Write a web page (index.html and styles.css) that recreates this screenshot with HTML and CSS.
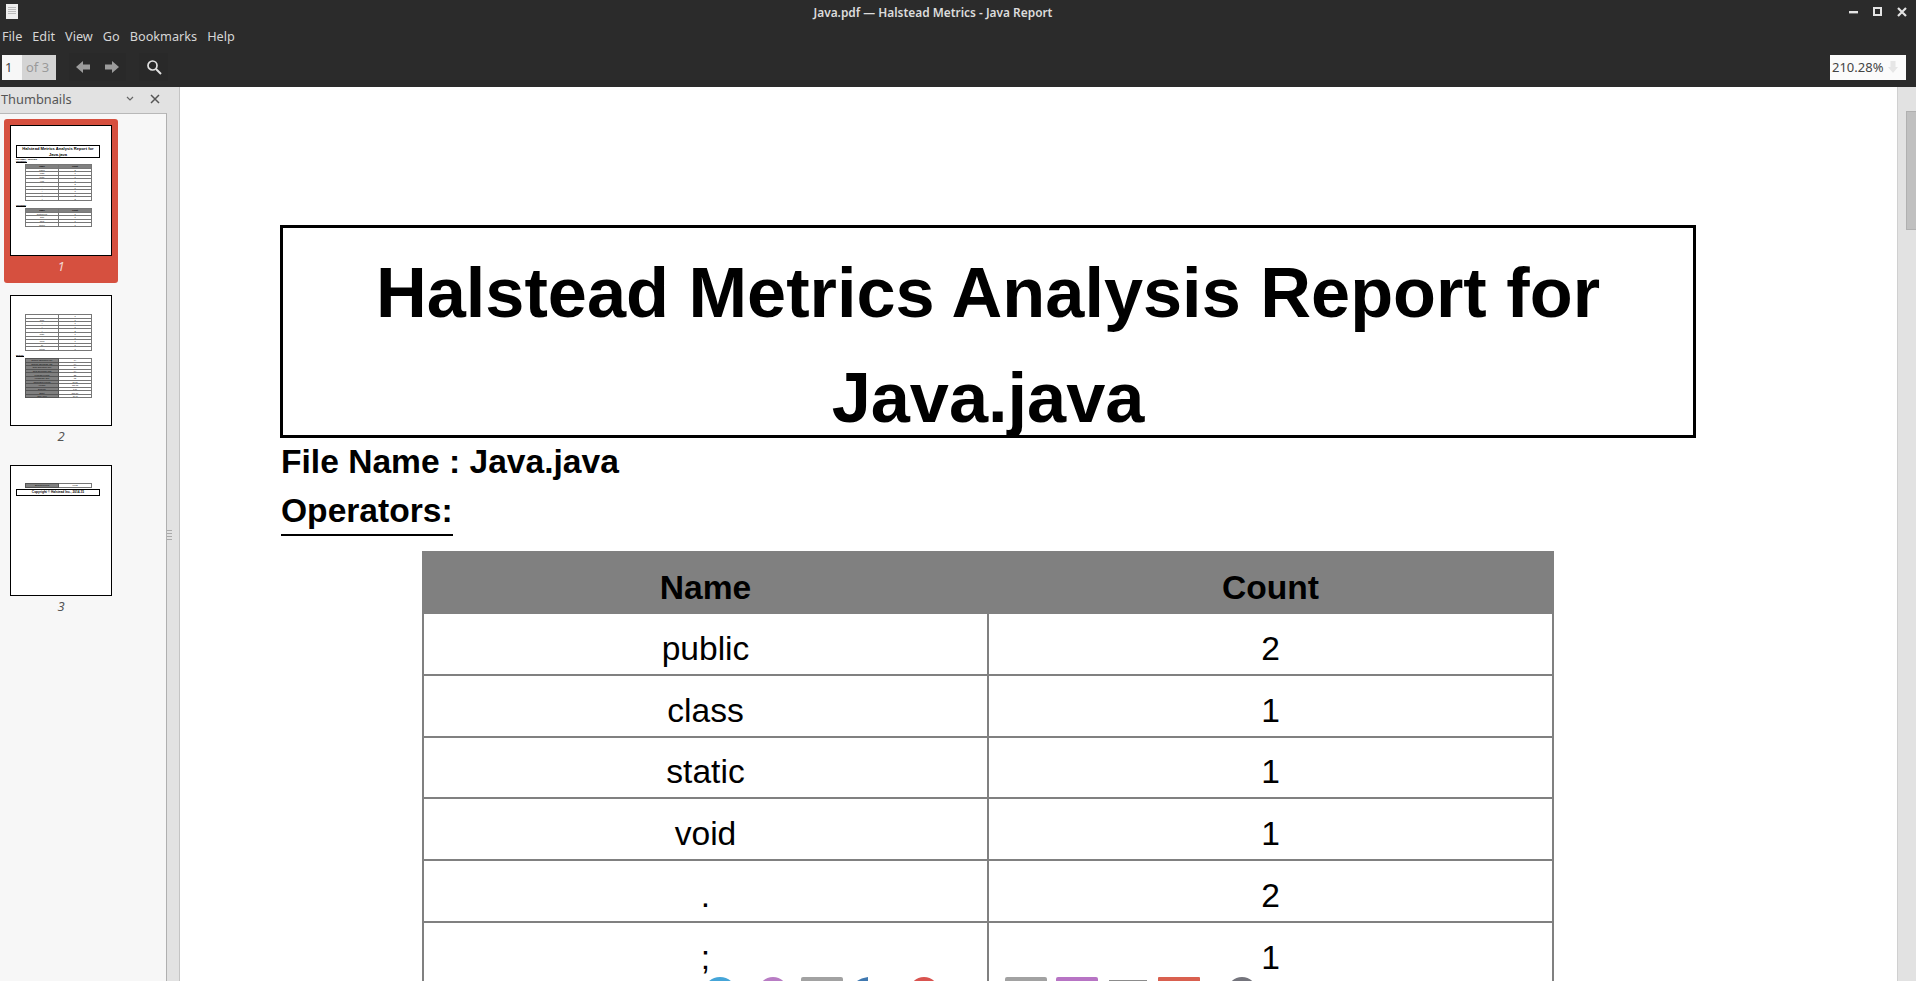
FILE: index.html
```html
<!DOCTYPE html>
<html lang="en">
<head>
  <meta charset="UTF-8" />
  <title>Java.pdf — Halstead Metrics - Java Report</title>
  <link rel="stylesheet" href="styles.css">
</head>
<body>
  <div class="titlebar">
    <div class="app-icon"><span></span><span></span><span></span><span></span></div>
    <div class="window-title">Java.pdf — Halstead Metrics - Java Report</div>
    <div class="window-btns">
      <svg width="12" height="12" viewBox="0 0 12 12"><rect x="1" y="5" width="9" height="2.4" fill="#e4e4e4"/></svg>
      <svg width="12" height="12" viewBox="0 0 12 12"><rect x="2" y="2" width="7" height="7" fill="none" stroke="#e4e4e4" stroke-width="2"/></svg>
      <svg width="12" height="12" viewBox="0 0 12 12"><path d="M2 2l8 8M10 2l-8 8" stroke="#e4e4e4" stroke-width="2.2"/></svg>
    </div>
  </div>

  <div class="menubar">
    <span>File</span><span>Edit</span><span>View</span><span>Go</span><span>Bookmarks</span><span>Help</span>
  </div>

  <div class="toolbar">
    <div class="page-field"><span class="page-num">1</span><span class="page-total">of 3</span></div>
    <div class="tool-group nav-group">
      <svg width="16" height="14" viewBox="0 0 16 14"><path d="M1 7l7-6v3.500h7v5H8V13z" fill="#9c9c9c"/></svg>
      <svg width="16" height="14" viewBox="0 0 16 14"><path d="M15 7L8 1v3.500H1v5h7V13z" fill="#9c9c9c"/></svg>
    </div>
    <div class="tool-group search-group">
      <svg width="16" height="16" viewBox="0 0 16 16"><circle cx="6.500" cy="6.500" r="4.500" fill="none" stroke="#e2e2e2" stroke-width="1.700"/><path d="M10 10l5 5" stroke="#e2e2e2" stroke-width="2"/></svg>
    </div>
    <div class="zoom-field">
      <span>210.28%</span>
      <svg width="12" height="14" viewBox="0 0 12 14"><path d="M6 13L1 7h2.500V1h5v6H11z" fill="#e6e6e6"/></svg>
    </div>
  </div>

  <div class="workspace">
    <aside class="sidebar">
      <div class="sidebar-inner">
        <div class="sidebar-head">
          <span class="sidebar-label">Thumbnails</span>
          <svg class="chev" width="10" height="8" viewBox="0 0 10 8"><path d="M2 2l3 3 3-3" fill="none" stroke="#666" stroke-width="1.200"/></svg>
          <svg class="closer" width="10" height="10" viewBox="0 0 10 10"><path d="M1 1l8 8M9 1L1 9" stroke="#555" stroke-width="1.500"/></svg>
        </div>
        <div class="thumb-list">
          <div class="thumb selected">
            <div class="mini-page">
              <div class="mini-title">Halstead Metrics Analysis Report for Java.java</div>
              <div class="mini-line">File Name : Java.java</div>
              <div class="mini-head">Operators:</div>
              <table class="mini-table">
                <tr class="mini-top"><td>Name</td><td>Count</td></tr>
                <tr><td>public</td><td>2</td></tr>
                <tr><td>class</td><td>1</td></tr>
                <tr><td>static</td><td>1</td></tr>
                <tr><td>void</td><td>1</td></tr>
                <tr><td>.</td><td>2</td></tr>
                <tr><td>;</td><td>1</td></tr>
                <tr><td>(</td><td>3</td></tr>
                <tr><td>)</td><td>3</td></tr>
                <tr><td>{</td><td>2</td></tr>
              </table>
              <div class="mini-head operands">Operands:</div>
              <table class="mini-table">
                <tr class="mini-top"><td>Name</td><td>Count</td></tr>
                <tr><td>System.out</td><td>1</td></tr>
                <tr><td>args</td><td>1</td></tr>
                <tr><td>Java</td><td>1</td></tr>
                <tr><td>println</td><td>1</td></tr>
              </table>
            </div>
            <div class="thumb-num">1</div>
          </div>
          <div class="thumb">
            <div class="mini-page page-two">
              <table class="mini-table">
                <tr><td>&nbsp;</td><td>1</td></tr>
                <tr><td>Type</td><td>1</td></tr>
                <tr><td>[</td><td>1</td></tr>
                <tr><td>]</td><td>1</td></tr>
                <tr><td>}</td><td>2</td></tr>
                <tr><td>main</td><td>1</td></tr>
                <tr><td>:</td><td>1</td></tr>
                <tr><td>Long</td><td>1</td></tr>
                <tr><td>int</td><td>1</td></tr>
                <tr><td>String</td><td>1</td></tr>
              </table>
              <div class="mini-head metrics">Metrics:</div>
              <table class="mini-table side-table">
                <tr><td>Distinct Operators (n1)</td><td>14</td></tr>
                <tr><td>Distinct Operands (n2)</td><td>04</td></tr>
                <tr><td>Total Operators (N1)</td><td>24</td></tr>
                <tr><td>Total Operands (N2)</td><td>04</td></tr>
                <tr><td>Program Length</td><td>28</td></tr>
                <tr><td>Vocabulary Size</td><td>18</td></tr>
                <tr><td>Calculated Length</td><td>61.30</td></tr>
                <tr><td>Volume</td><td>116.75</td></tr>
                <tr><td>Difficulty</td><td>7.00</td></tr>
                <tr><td>Effort</td><td>817.30</td></tr>
                <tr><td>Time (sec)</td><td>45.40</td></tr>
              </table>
            </div>
            <div class="thumb-num">2</div>
          </div>
          <div class="thumb">
            <div class="mini-page page-three">
              <table class="mini-table side-table">
                <tr><td>Bugs Delivered</td><td>0.038</td></tr>
              </table>
              <div class="mini-title mini-foot">Copyright © Halstead Inc., 2014-15</div>
            </div>
            <div class="thumb-num">3</div>
          </div>
        </div>
      </div>
      <div class="splitter"><span class="grip"></span></div>
    </aside>

    <main class="doc">
      <div class="page">
        <h1 class="report-title">Halstead Metrics Analysis Report for Java.java</h1>
        <p class="file-name">File Name : Java.java</p>
        <h2 class="section-head">Operators:</h2>
        <table class="report-table">
          <tr class="head-row"><th>Name</th><th>Count</th></tr>
          <tr><td>public</td><td>2</td></tr>
          <tr><td>class</td><td>1</td></tr>
          <tr><td>static</td><td>1</td></tr>
          <tr><td>void</td><td>1</td></tr>
          <tr><td>.</td><td>2</td></tr>
          <tr><td>;</td><td>1</td></tr>
        </table>
      </div>
    </main>

    <div class="scrollbar"><div class="scroll-thumb"></div></div>

    <svg class="dock" width="570" height="4" viewBox="0 0 570 4">
      <ellipse cx="30" cy="15" rx="16" ry="15" fill="#45a5d8"/>
      <circle cx="83" cy="15" r="15" fill="#b87cc4"/>
      <rect x="111" y="0" width="42" height="8" rx="2" fill="#a2a2a2"/>
      <path d="M167 4q4-3 11-4v4z" fill="#3f78b0"/>
      <circle cx="234" cy="15" r="15" fill="#d9534f"/>
      <rect x="315" y="0" width="42" height="8" rx="2" fill="#a2a2a2"/>
      <rect x="366" y="0" width="42" height="8" rx="2" fill="#b774c4"/>
      <rect x="419" y="3" width="38" height="8" fill="#8c8c8c"/>
      <rect x="468" y="0" width="42" height="8" rx="1" fill="#d9604f"/>
      <circle cx="552" cy="15" r="15" fill="#74747c"/>
    </svg>
  </div>
</body>
</html>
```

FILE: styles.css
```css
* {
  box-sizing: border-box;
}
html, body {
  margin: 0;
  height: 100%;
  overflow: hidden;
}
body {
  display: flex;
  flex-direction: column;
  font-family: 'Noto Sans', sans-serif;
  background-color: #2b2b2b;
}

/* window chrome */
.titlebar {
  display: flex;
  align-items: center;
  height: 23px;
  flex-shrink: 0;
  color: #dcdcdc;
}
.app-icon {
  width: 12px;
  height: 15px;
  margin-left: 6px;
  margin-right: 6px;
  padding: 3px 2px;
  background-color: #eee;
  display: flex;
  flex-direction: column;
  gap: 1px;
}
.app-icon span {
  height: 1px;
  background-color: #bbb;
}
.window-title {
  flex: 1;
  text-align: center;
  font-size: 11.900px;
  font-weight: 600;
}
.window-btns {
  width: 74px;
  display: flex;
  justify-content: flex-end;
  padding-right: 8px;
  padding-top: 1px;
  gap: 12px;
}
.menubar {
  display: flex;
  gap: 10px;
  height: 27px;
  flex-shrink: 0;
  align-items: center;
  padding-left: 2px;
  padding-bottom: 1px;
  font-size: 12.700px;
  color: #d6d6d6;
}
.toolbar {
  display: flex;
  align-items: center;
  height: 37px;
  flex-shrink: 0;
  padding-left: 2px;
  padding-right: 10px;
  padding-bottom: 3px;
}
.page-field {
  display: flex;
  width: 54px;
  height: 25px;
  font-size: 13px;
  line-height: 25px;
}
.page-num {
  width: 20px;
  padding-left: 3px;
  background-color: #f7f7f7;
  color: #444;
}
.page-total {
  flex: 1;
  padding-left: 4px;
  background-color: #d4d4d4;
  color: #9a9a9a;
}
.tool-group {
  display: flex;
  align-items: center;
  justify-content: space-around;
  height: 28px;
  background-color: #292929;
}
.nav-group {
  width: 57px;
  margin-left: 13px;
}
.search-group {
  width: 29px;
  margin-left: 13px;
}
.zoom-field {
  display: flex;
  align-items: center;
  justify-content: space-between;
  width: 76px;
  height: 25px;
  margin-left: auto;
  padding: 0 7px 0 2px;
  background-color: #fbfbfb;
  font-size: 13px;
  color: #444;
}

.workspace {
  position: relative;
  flex: 1;
  display: flex;
  min-height: 0;
}

/* thumbnails panel */
.sidebar {
  display: flex;
  width: 180px;
  flex-shrink: 0;
  background-color: #e2e2e2;
}
.sidebar-inner {
  width: 167px;
  display: flex;
  flex-direction: column;
}
.sidebar-head {
  display: flex;
  align-items: center;
  height: 26px;
  padding-left: 1px;
  padding-bottom: 2px;
  background-color: #e2e2e2;
  font-size: 12.800px;
  color: #555;
}
.sidebar-label {
  flex: 1;
}
.chev {
  margin-right: 15px;
}
.closer {
  margin-right: 7px;
}
.thumb-list {
  flex: 1;
  padding: 5px 0 0 4px;
  background-color: #f7f7f7;
  border-top: 1px solid #b8b8b8;
  border-right: 1px solid #b0b0b0;
  display: flex;
  flex-direction: column;
  gap: 6px;
}
.thumb {
  width: 114px;
  height: 164px;
  padding: 6px 6px 0;
  border-radius: 3px;
}
.thumb.selected {
  background-color: #d6503f;
}
.mini-page {
  width: 102px;
  height: 131px;
  padding: 19px 5px 0 5px;
  border: 1.500px solid #000;
  background-color: #fff;
  font-family: 'Liberation Sans', sans-serif;
  color: #000;
}
.mini-title {
  width: 84px;
  height: 13px;
  border: 1px solid #000;
  text-align: center;
  font-size: 4.100px;
  line-height: 6px;
  font-weight: bold;
}
.mini-line, .mini-head {
  font-size: 2.100px;
  line-height: 2px;
  font-weight: bold;
}
.mini-head {
  width: fit-content;
  border-bottom: 0.600px solid #000;
  line-height: 2px;
}
.operands {
  margin-top: 3px;
}
.metrics {
  margin-top: 3px;
  margin-bottom: 1px;
}
.mini-table {
  width: 67px;
  margin: 1px 0 0 9px;
  border-collapse: collapse;
  table-layout: fixed;
  font-size: 2.100px;
  text-align: center;
}
.mini-table td {
  height: 3.600px;
  padding: 0;
  border: 0.700px solid #777;
  line-height: 2px;
}
.mini-top td {
  background-color: #808080;
  font-weight: bold;
}
.side-table td:first-child {
  background-color: #808080;
  border-color: #555;
}
.page-two {
  padding-top: 17px;
}
.page-three {
  padding-top: 16px;
}
.page-three .mini-foot {
  height: 7px;
  margin-top: 1px;
  line-height: 5px;
  font-size: 3.200px;
}
.thumb-num {
  margin-top: 1px;
  text-align: center;
  font-size: 13px;
  font-style: italic;
  color: #555;
}
.selected .thumb-num {
  color: #f3d6d0;
}
.splitter {
  position: relative;
  flex: 1;
  border-right: 1px solid #c4c4c4;
}
.grip {
  position: absolute;
  left: 0;
  top: 443px;
  width: 5px;
  height: 12px;
  background: repeating-linear-gradient(#aaa 0 1px, transparent 1px 3px);
}

/* document */
.doc {
  flex: 1;
  min-width: 0;
  background-color: #fff;
  overflow: hidden;
}
.page {
  width: 1416px;
  margin-left: 100px;
  padding-top: 138px;
  font-family: 'Liberation Sans', sans-serif;
  color: #000;
}
.report-title {
  margin: 0;
  height: 213px;
  padding-top: 12px;
  border: 3px solid #000;
  text-align: center;
  font-size: 70.300px;
  line-height: 105px;
  font-weight: bold;
}
.file-name {
  margin: 1px 0 0 1px;
  font-size: 33.600px;
  line-height: 45px;
  font-weight: bold;
}
.section-head {
  width: fit-content;
  margin: 4px 0 0 1px;
  font-size: 33.600px;
  line-height: 46px;
  font-weight: bold;
  border-bottom: 2px solid #000;
}
.report-table {
  width: 1132px;
  margin: 15px auto 0;
  border-collapse: collapse;
  table-layout: fixed;
  font-size: 33.600px;
  text-align: center;
}
.report-table th, .report-table td {
  height: 61.800px;
  padding: 10px 0 0;
  border: 2px solid #808080;
}
.head-row th {
  height: 61px;
  background-color: #808080;
}

.scrollbar {
  width: 19px;
  flex-shrink: 0;
  padding: 24px 0 0 8px;
  background-color: #e2e2e2;
  border-left: 1px solid #d0d0d0;
}
.scroll-thumb {
  width: 11px;
  height: 119px;
  background-color: #c0c0c0;
  border: 1px solid #b0b0b0;
}

/* launcher peeking over the bottom edge */
.dock {
  position: absolute;
  left: 690px;
  bottom: 0;
}
```
